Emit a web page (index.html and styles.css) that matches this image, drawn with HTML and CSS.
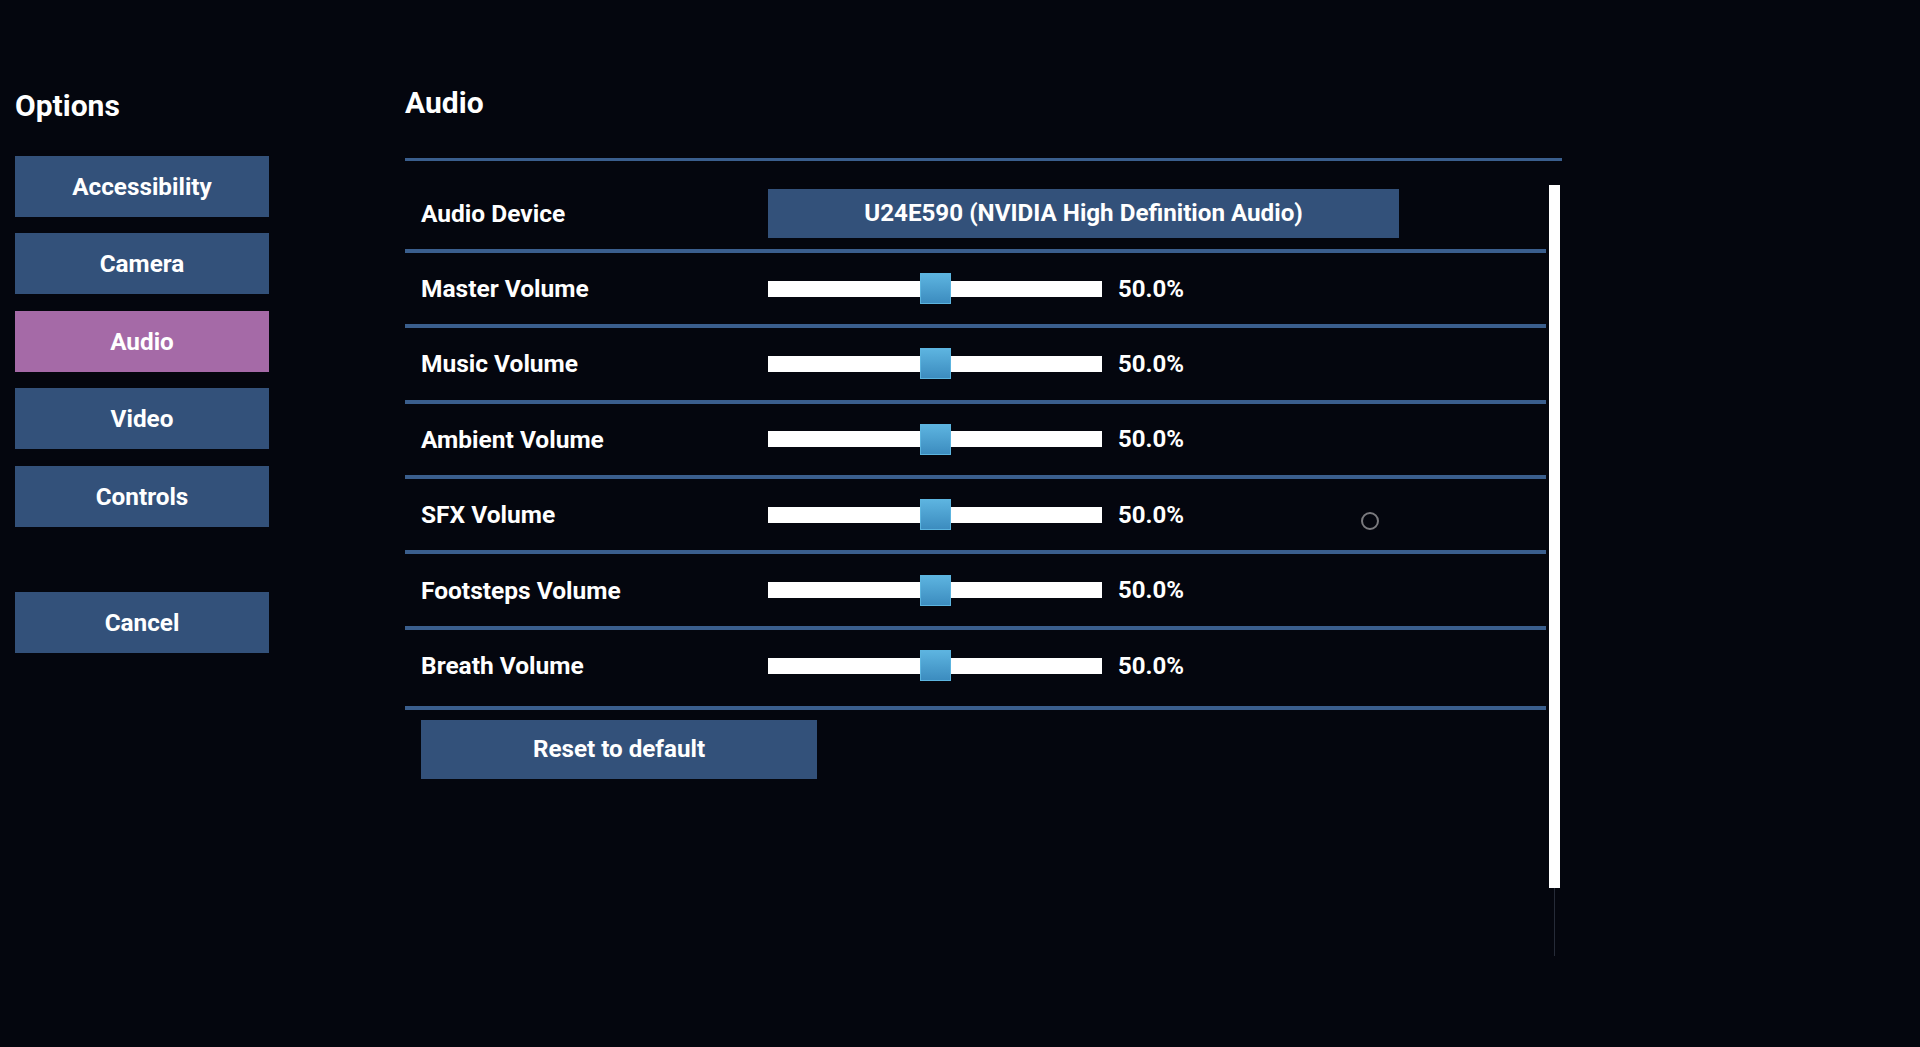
FILE: index.html
```html
<!DOCTYPE html>
<html>
<head>
<meta charset="utf-8">
<link rel="stylesheet" href="styles.css">
</head>
<body>
<div class="screen">
  <aside class="sidebar">
    <h1 class="title">Options</h1>
    <nav class="menu">
      <div class="btn">Accessibility</div>
      <div class="btn">Camera</div>
      <div class="btn active">Audio</div>
      <div class="btn">Video</div>
      <div class="btn">Controls</div>
      <div class="btn cancel">Cancel</div>
    </nav>
  </aside>
  <main class="main">
    <h1 class="title">Audio</h1>
    <div class="header-line"></div>
    <div class="scroll">
      <div class="content">
        <div class="row">
          <div class="label">Audio Device</div>
          <div class="dropdown">U24E590 (NVIDIA High Definition Audio)</div>
        </div>
        <div class="row">
          <div class="label">Master Volume</div>
          <div class="slider"><div class="track"></div><div class="handle"></div></div>
          <div class="value">50.0%</div>
        </div>
        <div class="row">
          <div class="label">Music Volume</div>
          <div class="slider"><div class="track"></div><div class="handle"></div></div>
          <div class="value">50.0%</div>
        </div>
        <div class="row">
          <div class="label">Ambient Volume</div>
          <div class="slider"><div class="track"></div><div class="handle"></div></div>
          <div class="value">50.0%</div>
        </div>
        <div class="row">
          <div class="label">SFX Volume</div>
          <div class="slider"><div class="track"></div><div class="handle"></div></div>
          <div class="value">50.0%</div>
        </div>
        <div class="row">
          <div class="label">Footsteps Volume</div>
          <div class="slider"><div class="track"></div><div class="handle"></div></div>
          <div class="value">50.0%</div>
        </div>
        <div class="row last">
          <div class="label">Breath Volume</div>
          <div class="slider"><div class="track"></div><div class="handle"></div></div>
          <div class="value">50.0%</div>
        </div>
        <div class="reset">Reset to default</div>
      </div>
      <div class="scrollcol">
        <div class="bar"></div>
        <div class="bar-line"></div>
      </div>
    </div>
  </main>
  <div class="cursor"></div>
</div>
</body>
</html>
```

FILE: styles.css
```css
html, body {
  margin: 0;
  padding: 0;
  background: #04060e;
}
body {
  width: 1920px;
  height: 1047px;
  overflow: hidden;
  font-family: Roboto, "Liberation Sans", sans-serif;
  font-weight: 700;
  color: #ffffff;
}
.screen {
  position: relative;
  display: flex;
  width: 1920px;
  height: 1047px;
}
.title {
  margin: 0;
  font-size: 30px;
  line-height: 36px;
  font-weight: 700;
}
.sidebar {
  width: 390px;
  padding-left: 15px;
  padding-top: 87.7px;
  box-sizing: content-box;
}
.menu {
  display: flex;
  flex-direction: column;
  gap: 16.5px;
  margin-top: 32.3px;
  width: 254px;
}
.btn {
  height: 61px;
  background: #33517a;
  display: flex;
  align-items: center;
  justify-content: center;
  font-size: 24.3px;
}
.btn.active {
  background: #a56aa7;
}
.btn.cancel {
  margin-top: 49px;
}
.main {
  padding-top: 84.7px;
  width: 1157px;
}
.header-line {
  margin-top: 37.8px;
  height: 3px;
  background: #3a5e8d;
}
.scroll {
  display: flex;
  margin-top: 16px;
}
.content {
  width: 1141px;
}
.row {
  height: 71.4px;
  border-bottom: 4px solid #3a5e8d;
  display: flex;
  align-items: center;
  padding-left: 16px;
}
.row.last {
  height: 76px;
}
.row.last .label,
.row.last .slider,
.row.last .value {
  margin-bottom: 4px;
}
.label {
  width: 347px;
  font-size: 24.5px;
  flex: none;
}
.dropdown {
  width: 631px;
  height: 49px;
  background: #33517a;
  display: flex;
  align-items: center;
  justify-content: center;
  font-size: 24.2px;
}
.slider {
  position: relative;
  width: 334px;
  height: 31px;
  display: flex;
  align-items: center;
  justify-content: center;
}
.track {
  width: 334px;
  height: 16px;
  background: #ffffff;
}
.handle {
  position: absolute;
  left: 151.5px;
  top: 0;
  width: 29px;
  height: 29px;
  border: 1px solid #5cb4df;
  background: linear-gradient(#5db4e0, #3c8cbf);
}
.value {
  margin-left: 16px;
  font-size: 24px;
}
.reset {
  margin-top: 10px;
  margin-left: 16px;
  width: 396px;
  height: 59px;
  background: #33517a;
  display: flex;
  align-items: center;
  justify-content: center;
  font-size: 24.2px;
}
.scrollcol {
  width: 16px;
  display: flex;
  flex-direction: column;
  align-items: center;
  padding-top: 7.4px;
}
.bar {
  width: 11px;
  height: 703px;
  background: #ffffff;
}
.bar-line {
  width: 1px;
  height: 68px;
  background: #262b38;
}
.cursor {
  position: absolute;
  left: 1361px;
  top: 512px;
  width: 14px;
  height: 14px;
  border: 2px solid #7a7a7e;
  border-radius: 50%;
}
```
